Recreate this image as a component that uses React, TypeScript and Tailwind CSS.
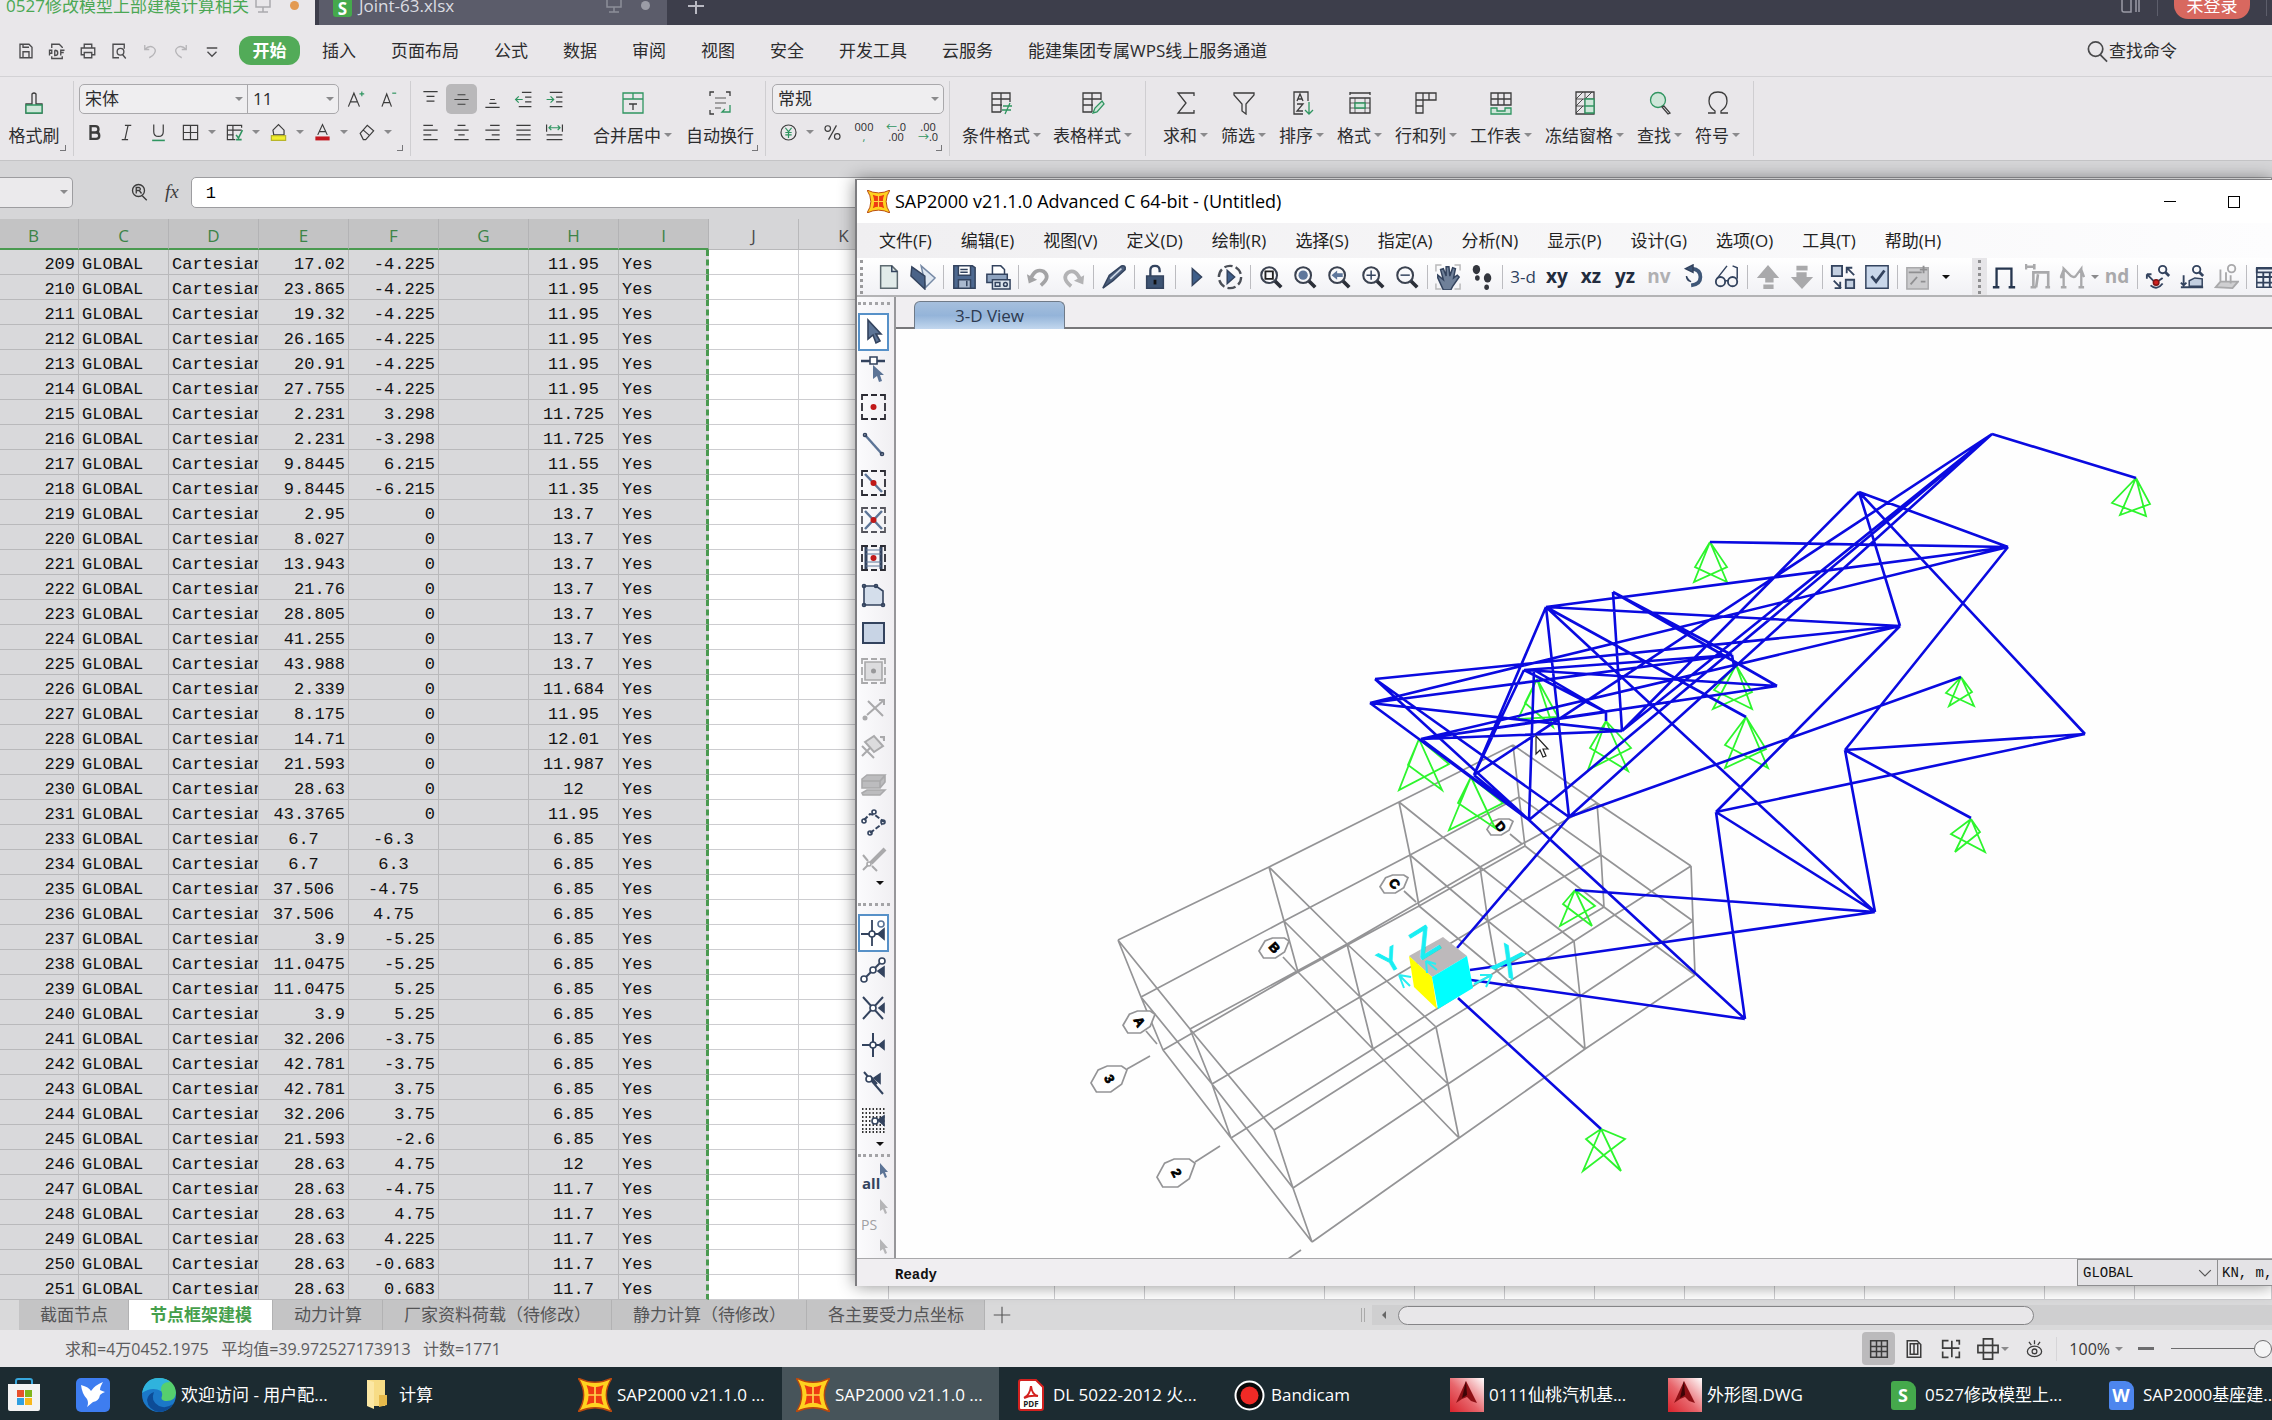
import { useState } from "react";
import type { ReactNode } from "react";

type Row = [number, string, string, string, boolean?];

// joint no., X, Y, Z, centred
const rows: Row[] = [
  [209, "17.02", "-4.225", "11.95"],
  [210, "23.865", "-4.225", "11.95"],
  [211, "19.32", "-4.225", "11.95"],
  [212, "26.165", "-4.225", "11.95"],
  [213, "20.91", "-4.225", "11.95"],
  [214, "27.755", "-4.225", "11.95"],
  [215, "2.231", "3.298", "11.725"],
  [216, "2.231", "-3.298", "11.725"],
  [217, "9.8445", "6.215", "11.55"],
  [218, "9.8445", "-6.215", "11.35"],
  [219, "2.95", "0", "13.7"],
  [220, "8.027", "0", "13.7"],
  [221, "13.943", "0", "13.7"],
  [222, "21.76", "0", "13.7"],
  [223, "28.805", "0", "13.7"],
  [224, "41.255", "0", "13.7"],
  [225, "43.988", "0", "13.7"],
  [226, "2.339", "0", "11.684"],
  [227, "8.175", "0", "11.95"],
  [228, "14.71", "0", "12.01"],
  [229, "21.593", "0", "11.987"],
  [230, "28.63", "0", "12"],
  [231, "43.3765", "0", "11.95"],
  [233, "6.7", "-6.3", "6.85", true],
  [234, "6.7", "6.3", "6.85", true],
  [235, "37.506", "-4.75", "6.85", true],
  [236, "37.506", "4.75", "6.85", true],
  [237, "3.9", "-5.25", "6.85"],
  [238, "11.0475", "-5.25", "6.85"],
  [239, "11.0475", "5.25", "6.85"],
  [240, "3.9", "5.25", "6.85"],
  [241, "32.206", "-3.75", "6.85"],
  [242, "42.781", "-3.75", "6.85"],
  [243, "42.781", "3.75", "6.85"],
  [244, "32.206", "3.75", "6.85"],
  [245, "21.593", "-2.6", "6.85"],
  [246, "28.63", "4.75", "12"],
  [247, "28.63", "-4.75", "11.7"],
  [248, "28.63", "4.75", "11.7"],
  [249, "28.63", "4.225", "11.7"],
  [250, "28.63", "-0.683", "11.7"],
  [251, "28.63", "0.683", "11.7"],
];

// the two lettered columns, then the ones behind the SAP2000 window
const emptyColumns = ["J", "K", ...Array.from({ length: 14 }, () => "")];

function Ico({
  w = 24,
  h = 24,
  box,
  color = "#3c3c3c",
  sw = 1.5,
  children,
}: {
  w?: number;
  h?: number;
  box?: string;
  color?: string;
  sw?: number;
  children: ReactNode;
}) {
  return (
    <svg
      width={w}
      height={h}
      viewBox={box ?? "0 0 24 24"}
      fill="none"
      stroke={color}
      strokeWidth={sw}
      aria-hidden="true"
      className="shrink-0"
    >
      {children}
    </svg>
  );
}

function Caret({ dark }: { dark?: boolean }) {
  return (
    <svg width="8" height="6" viewBox="0 0 8 6" aria-hidden="true" className="shrink-0">
      <path d="M0 1h8L4 5z" fill={dark ? "#111" : "#8a8a8c"} />
    </svg>
  );
}

const G = "#2f9560";
const GF = "#cfe6d9";

/* ---------- spreadsheet: tab strip and menu ---------- */

function DocTabs() {
  return (
    <header className="flex h-[25px] overflow-hidden bg-[#3d3e4b] text-[17px]">
      <button className="flex w-[315px] items-start bg-[#e9e7ea] text-left whitespace-nowrap text-[#4ba754]">
        <span className="-mt-[7px] pl-[6px] leading-[26px]">0527修改模型上部建模计算相关</span>
        <span className="ml-[5px]">
          <Monitor color="#aaaaae" />
        </span>
        <span className="mt-[1px] ml-[18px] size-[9px] rounded-full bg-[#e39a52]" />
      </button>
      <button className="ml-[4px] flex w-[348px] items-start bg-[#5b5c6a] pl-[14px] text-left text-[#dcdce2]">
        <span className="flex h-[17px] w-[19px] items-end justify-center rounded-b-[3px] bg-[#45a94c] text-[17px] leading-[17px] font-bold text-white">
          S
        </span>
        <span className="-mt-[7px] pl-[7px] leading-[26px]">Joint-63.xlsx</span>
        <span className="ml-auto flex pr-[17px]">
          <Monitor color="#8d8e99" />
          <span className="mt-[1px] ml-[18px] size-[9px] rounded-full bg-[#9b9ca6]" />
        </span>
      </button>
      <button aria-label="新建标签" className="ml-[20px]">
        <Ico w={18} h={24} box="0 0 18 24" color="#b9b9c2" sw={2}>
          <path d="M9-4v17M1 5h16" />
        </Ico>
      </button>
      <div className="ml-auto flex items-start text-[#8f909b]">
        <Ico w={22} h={14} box="0 0 22 14" color="#9a9ba6">
          <path d="M3 0v10q0 2 2 2h7V0M17 0v12M20 0v12" />
        </Ico>
        <span className="ml-[16px] h-4 w-px bg-[#5d5e6b]" />
        <button className="ml-[16px] h-[19px] w-[76px] rounded-b-[14px] bg-[#d8685f] text-white">
          <span className="-mt-[7px] block leading-[26px]">未登录</span>
        </button>
        <span className="mr-[5px] ml-[16px] h-4 w-px bg-[#5d5e6b]" />
      </div>
    </header>
  );
}

function Monitor({ color }: { color: string }) {
  return (
    <Ico w={18} h={14} box="0 0 18 14" color={color}>
      <path d="M2 0v7h14V0M9 7v5M4 12h10" />
    </Ico>
  );
}

const menus = ["插入", "页面布局", "公式", "数据", "审阅", "视图", "安全", "开发工具", "云服务", "能建集团专属WPS线上服务通道"];

function MenuRow() {
  return (
    <nav className="flex h-[52px] items-center border-b border-[#d3d2d5] bg-[#e9e7ea] text-[17px] whitespace-nowrap text-[#2c2c2e]">
      <div className="flex w-[239px] items-center pl-[10px]">
        <QuickButton label="保存">
          <path d="M4 3h12l4 4v14H4zM8 3v4h8M8 21v-8h8v8" />
        </QuickButton>
        <QuickButton label="输出为PDF">
          <path d="M5 8V3h10l4 4v1M5 19v3h14v-3M2 18v-7h3v4H2M9 11v7q4 0 4-3.500t-4-3.500M17 18v-7h5M17 14h4" />
        </QuickButton>
        <QuickButton label="打印">
          <path d="M7 8V3h10v5M7 17H3V8h18v9h-4M7 14h10v7H7z" />
        </QuickButton>
        <QuickButton label="打印预览">
          <path d="M12 21H4V3h15v6" />
          <circle cx="14" cy="13" r="4.500" />
          <path d="m17 17 4 5" />
        </QuickButton>
        <QuickButton label="撤销" color="#b6b5b8">
          <path d="M5 4v6h6M5 10q6-6 11-3t2 8q-2 4-7 6" />
        </QuickButton>
        <QuickButton label="恢复" color="#b6b5b8">
          <path d="M19 4v6h-6M19 10q-6-6-11-3t-2 8q2 4 7 6" />
        </QuickButton>
        <QuickButton label="自定义快速访问工具栏">
          <path d="M5 8h14M6 13l6 6 6-6" />
        </QuickButton>
      </div>
      <button className="h-[29px] w-[61px] rounded-[12px] bg-[#52ab58] font-bold text-white">开始</button>
      <div className="ml-[22px] flex gap-[35px]">
        {menus.map((m) => (
          <button key={m}>{m}</button>
        ))}
      </div>
      <button className="mr-[95px] ml-auto flex items-center">
        <Ico w={23} h={24} color="#4a4a4c" sw={1.8}>
          <circle cx="10" cy="10" r="7.500" />
          <path d="m15 16 7 7" />
        </Ico>
        查找命令
      </button>
    </nav>
  );
}

function QuickButton({ label, color, children }: { label: string; color?: string; children: ReactNode }) {
  return (
    <button aria-label={label} className="flex w-[31px] justify-center">
      <Ico w={18} h={18} color={color ?? "#4c4c4e"} sw={1.8}>
        {children}
      </Ico>
    </button>
  );
}

/* ---------- spreadsheet: ribbon ---------- */

function Big({ label, caret = true, children }: { label: string; caret?: boolean; children: ReactNode }) {
  return (
    <button className="flex flex-col items-center whitespace-nowrap">
      <span className="flex h-[38px] items-center">
        <Ico w={24} h={24} sw={1.3}>
          {children}
        </Ico>
      </span>
      <span className="flex h-[28px] items-center">
        {label}
        {caret && (
          <span className="-mt-[3px] flex w-[11px] justify-end">
            <Caret />
          </span>
        )}
      </span>
    </button>
  );
}

function Small({
  label,
  on,
  w31,
  children,
}: {
  label: string;
  on?: boolean;
  w31?: boolean;
  children: ReactNode;
}) {
  return (
    <button
      aria-label={label}
      className={`flex h-[30px] items-center justify-center rounded-[5px] ${w31 ? "w-[31px]" : "w-8"} ${on ? "bg-[#b9b8ba]" : ""}`}
    >
      <Ico w={19} h={19} sw={1.5}>
        {children}
      </Ico>
    </button>
  );
}

function SmallCaret() {
  return (
    <span className="flex w-3 items-center justify-center">
      <Caret />
    </span>
  );
}

function Combo({ label, value, className }: { label: string; value: string; className: string }) {
  return (
    <span className={`relative flex h-[30px] items-center ${className}`}>
      <select aria-label={label} className="h-full w-full appearance-none bg-transparent pl-[5px] text-[17px] outline-none">
        <option>{value}</option>
      </select>
      <span className="pointer-events-none absolute right-[4px]">
        <Caret />
      </span>
    </span>
  );
}

function Corner() {
  return (
    <span className="absolute right-[7px] bottom-[5px] size-[6px] border-r border-b border-[#77777a]" />
  );
}

function Ribbon() {
  return (
    <section className="flex h-[84px] border-b border-[#c4c4c6] bg-[#e9e7ea] text-[17px] text-[#2c2c2e]">
      <div className="relative my-[4px] flex w-[74px] justify-center border-r border-[#cfced1] pt-[3px] pr-[5px]">
        <Big label="格式刷" caret={false}>
          <path d="M10 13V3q2-2 4 0v10h6v9H4v-9z" />
          <path d="M4 14h16v8H4z" fill={GF} stroke={G} />
        </Big>
        <Corner />
      </div>

      <div className="relative my-[4px] flex w-[337px] flex-col border-r border-[#cfced1] pt-[3px] pl-[4px]">
        <div className="flex">
          <div className="ml-px flex w-[260px] rounded-[5px] border border-[#a9a8ab] bg-[#efeef0]">
            <Combo label="字体" value="宋体" className="-my-px flex-1" />
            <Combo label="字号" value="11" className="-my-px w-[91px] border-l border-[#a9a8ab]" />
          </div>
          <Small label="增大字号">
            <path d="M3 21 10 4l7 17M6 15h8" />
            <path d="M20 2v6M17 5h6" stroke={G} />
          </Small>
          <Small label="减小字号">
            <path d="M5 21 11 5l6 16M7 16h8" />
            <path d="M18 4h5" stroke={G} />
          </Small>
        </div>
        <div className="flex pt-[3px]">
          <Small label="加粗">
            <path d="M7 4v16h7q4 0 4-4t-4-4H7h6q4 0 4-4t-4-4z" strokeWidth="3" />
          </Small>
          <Small label="倾斜">
            <path d="M10 3h8M6 21h8M14 3l-4 18" />
          </Small>
          <Small label="下划线">
            <path d="M6 2v9q0 6 6 6t6-6V2" />
            <path d="M4 22h16" stroke={G} strokeWidth="2" />
          </Small>
          <Small label="边框">
            <path d="M3 3h18v18H3zM12 3v18M3 12h18" />
          </Small>
          <SmallCaret />
          <Small label="绘图边框">
            <path d="M21 6V3H3v18h10M3 9h18M3 15h8M10 3v18" />
            <path d="m14 15 3 4 5-10M14 21h7" stroke={G} strokeWidth="2" />
          </Small>
          <SmallCaret />
          <Small label="填充颜色">
            <path d="m5 9 7-7 7 7v6H6z" />
            <path d="M3 16h18v6H3z" fill="#f1ee2d" stroke="#b8b52a" />
          </Small>
          <SmallCaret />
          <Small label="字体颜色">
            <path d="m6 15 6-13 6 13M8 11h8" />
            <path d="M3 17h18v5H3z" fill="#c4171f" stroke="none" />
          </Small>
          <SmallCaret />
          <Small label="清除">
            <path d="M4 13 13 3l8 7-10 11H8zM8 9l8 7" />
          </Small>
          <SmallCaret />
        </div>
        <Corner />
      </div>

      <div className="relative my-[4px] flex w-[355px] border-r border-[#cfced1] pt-[3px] pl-[4px]">
        <div className="grid w-[178px] grid-cols-[31px_31px_31px_31px_31px] grid-rows-[30px_30px] gap-y-[3px]">
          <Small w31 label="顶端对齐">
            <path d="M3 2h18M7 8h10M7 14h10" />
          </Small>
          <Small w31 on label="垂直居中">
            <path d="M7 6h10M3 12h18M7 18h10" />
          </Small>
          <Small w31 label="底端对齐">
            <path d="M9 12h6M8 17h9M3 22h18" />
          </Small>
          <Small w31 label="减少缩进">
            <path d="M10 3h12M14 9h8M14 15h8M6 21h16" />
            <path d="M11 12H2m4-4-4 4 4 4" stroke={G} />
          </Small>
          <Small w31 label="增加缩进">
            <path d="M6 3h16M14 9h8M14 15h8M6 21h16" />
            <path d="M2 12h9M7 8l4 4-4 4" stroke={G} />
          </Small>
          <Small w31 label="左对齐">
            <path d="M3 3h12M3 9h18M3 15h10M3 21h18" />
          </Small>
          <Small w31 label="水平居中">
            <path d="M7 3h10M3 9h18M8 15h8M3 21h18" />
          </Small>
          <Small w31 label="右对齐">
            <path d="M9 3h12M3 9h18M11 15h10M3 21h18" />
          </Small>
          <Small w31 label="两端对齐">
            <path d="M3 3h18M3 9h18M3 15h18M3 21h18" />
          </Small>
          <Small w31 label="分散对齐">
            <path d="M2 2v9M22 2v9M2 15h20M2 21h20" />
            <path d="M5 6h14M8 3 5 6l3 3M16 3l3 3-3 3" stroke={G} />
          </Small>
        </div>
        <div className="flex gap-[14px]">
          <Big label="合并居中">
            <path d="M2 2h20v20H2zM2 8h20M12 2v6" stroke={G} />
            <path d="M8 13h8M12 13v6" />
          </Big>
          <Big label="自动换行" caret={false}>
            <path d="M6 1H2v4M18 1h4v4M2 19v4h4" />
            <path d="M7 7h11M7 12h11M7 17h6" stroke="#888" />
            <path d="M22 14v7h-8l3-3" stroke={G} />
          </Big>
        </div>
        <Corner />
      </div>

      <div className="relative my-[4px] w-[184px] border-r border-[#cfced1] pt-[3px] pl-[6px]">
        <Combo label="数字格式" value="常规" className="w-[172px] rounded-[5px] border border-[#a9a8ab] bg-[#efeef0]" />
        <div className="flex pt-[3px]">
          <Small label="货币">
            <circle cx="12" cy="12" r="9.500" />
            <path d="m8 6 4 5 4-5M12 11v8M8 12h8M8 15h8" stroke={G} />
          </Small>
          <SmallCaret />
          <Small label="百分比">
            <circle cx="6" cy="7" r="3.500" />
            <circle cx="18" cy="17" r="3.500" />
            <path d="M17 3 7 21" />
          </Small>
          <button aria-label="千位分隔" className="flex w-8 flex-col items-center justify-center text-[11px] leading-[10px]">
            000<span className="text-[#2f9560]">,</span>
          </button>
          <button aria-label="增加小数位" className="flex w-8 flex-col items-center justify-center text-[11px] leading-[10px]">
            <span>
              <span className="text-[#2f9560]">←</span>.0
            </span>
            <span>.00</span>
          </button>
          <button aria-label="减少小数位" className="flex w-8 flex-col items-center justify-center text-[11px] leading-[10px]">
            <span>.00</span>
            <span>
              <span className="text-[#2f9560]">→</span>.0
            </span>
          </button>
        </div>
        <Corner />
      </div>

      <div className="my-[4px] flex w-[196px] gap-[12px] border-r border-[#cfced1] pt-[3px] pl-[12px]">
        <Big label="条件格式">
          <path d="M20 11V2H2v19h9M2 8h18M2 14h10M11 2v19" />
          <path d="M13 15h9M12 19h9M20 12l-5 11" stroke={G} />
        </Big>
        <Big label="表格样式">
          <path d="M20 9V2H2v19h9M2 8h18M2 14h10M11 2v19" />
          <path d="m12 22 2-5 7-7 2 3-7 8z" stroke={G} fill={GF} />
        </Big>
      </div>

      <div className="my-[4px] flex w-[608px] gap-[13px] border-r border-[#cfced1] pt-[3px] pl-[17px]">
        <Big label="求和">
          <path d="M20 5V2H4l8 10-8 10h16v-3" />
        </Big>
        <Big label="筛选">
          <path d="M2 2h20v2l-8 9v10l-4-3v-7L2 4z" />
        </Big>
        <Big label="排序">
          <path d="M13 23H4V1h14v9" />
          <path d="m7 10 3-7 3 7M8 8h4M7 13h6l-6 7h6" />
          <path d="M19 11v12M15 19l4 4 4-4" stroke={G} />
        </Big>
        <Big label="格式">
          <path d="M2 1v3M22 1v3M2 2h20M2 7h20v15H2z" />
          <path d="M2 12h20M2 17h20M7 7v15M17 7v15" strokeWidth="0.800" />
          <path d="M7 12h10v5H7z" fill={GF} stroke={G} />
        </Big>
        <Big label="行和列">
          <path d="M2 2h20v7H9v13H2zM9 2v7M15 2v7M2 9h7M2 15h7" />
        </Big>
        <Big label="工作表">
          <path d="M2 2h20v12H2zM2 8h20M9 2v12M15 2v12" />
          <path d="M2 17h6v3h8v-3h6v6H2z" stroke={G} fill={GF} />
        </Big>
        <Big label="冻结窗格">
          <path d="M3 1h18v22H3z" />
          <path d="M3 8h18M3 15h18M12 1v22M3 8l7-7M12 8l7-7M3 15l7-7M3 22l7-7" strokeWidth="0.900" />
          <path d="M12 8h9v7h-9zM12 15h9v7h-9z" fill={GF} stroke={G} />
        </Big>
        <Big label="查找">
          <circle cx="10" cy="9" r="7.500" fill={GF} stroke={G} />
          <path d="m14 16 2-1 6 7-2 1z" />
        </Big>
        <Big label="符号">
          <path d="M2 22h7v-2q-6-4-6-10 0-9 9-9t9 9q0 6-6 10v2h7" />
        </Big>
      </div>
    </section>
  );
}

function FormulaBar() {
  const [formula, setFormula] = useState("1");
  return (
    <div className="flex h-[58px] items-center bg-[#d6d6d8] pt-[4px]">
      <span className="relative flex h-[31px] w-[73px] items-center rounded-r-[5px] border border-l-0 border-[#9d9da0] bg-[#ebeaec]">
        <input aria-label="名称框" className="w-[60px] bg-transparent outline-none" />
        <span className="absolute right-[4px]">
          <Caret />
        </span>
      </span>
      <button aria-label="浏览公式结果" className="ml-[58px]">
        <Ico w={18} h={18} sw={1.8}>
          <circle cx="10" cy="10" r="8" />
          <path d="m15 17 6 6M7 14V6h4q3 2 0 4H7m4 0 3 4" />
        </Ico>
      </button>
      <button className="mr-[12px] ml-[16px] font-['Liberation_Serif',serif] text-[19px] text-[#3c3c3e] italic">fx</button>
      <input
        aria-label="编辑栏"
        value={formula}
        onChange={(e) => setFormula(e.target.value)}
        className="h-[31px] min-w-0 flex-1 rounded-l-[5px] border border-[#9d9da0] bg-white px-[14px] pt-[3px] font-['Liberation_Mono',monospace] text-[17px] outline-none"
      />
    </div>
  );
}

/* ---------- spreadsheet: cells ---------- */

function Sheet() {
  const td = "h-[25px] border-r border-b border-[#b9b9bb] bg-[#d9d9db] px-[3px] pt-[5px]";
  const blank = "border-r border-b border-[#cdcdd0] bg-white";
  return (
    <table className="w-full table-fixed border-separate border-spacing-0 overflow-hidden font-['Liberation_Mono','Noto_Sans_CJK_SC',monospace] text-[17px] leading-[19px] whitespace-nowrap text-[#111]">
      <colgroup>
        <col className="w-[79px]" />
        <col className="w-[90px]" span={7} />
        <col className="w-[90px]" span={2} />
        <col className="w-[166px]" />
        <col className="w-[90px]" span={12} />
        <col />
      </colgroup>
      <thead className="font-['Open_Sans',sans-serif] text-[17px]">
        <tr className="h-[31px]">
          {["B", "C", "D", "E", "F", "G", "H", "I"].map((c) => (
            <th
              key={c}
              className={`border-r border-b-2 border-r-[#b3b3b5] border-b-[#4a9a50] bg-[#c3c3c4] pt-[3px] font-normal text-[#3c8447] ${c === "B" ? "pr-[11px]" : ""}`}
            >
              {c}
            </th>
          ))}
          {emptyColumns.map((c, i) => (
            <th key={i} className="border-r border-b border-[#b8b8ba] bg-[#d6d6d8] pt-[3px] font-normal text-[#4a4a4c]">
              {c}
            </th>
          ))}
        </tr>
      </thead>
      <tbody>
        {rows.map(([no, x, y, z, centred]) => (
          <tr key={no}>
            <td className={`${td} text-right`}>{no}</td>
            <td className={td}>GLOBAL</td>
            <td className={`${td} overflow-hidden text-clip`}>Cartesian</td>
            <td className={`${td} ${centred ? "text-center" : "text-right"}`}>{x}</td>
            <td className={`${td} ${centred ? "text-center" : "text-right"}`}>{y}</td>
            <td className={td} />
            <td className={`${td} text-center`}>{z}</td>
            <td className="h-[25px] border-r-3 border-b border-r-[#4a9a50] border-b-[#b9b9bb] bg-[#d9d9db] px-[3px] pt-[5px] [border-right-style:dashed]">
              Yes
            </td>
            {emptyColumns.map((_, i) => (
              <td key={i} className={blank} />
            ))}
          </tr>
        ))}
      </tbody>
    </table>
  );
}

const sheetTabs = ["截面节点", "节点框架建模", "动力计算", "厂家资料荷载（待修改）", "静力计算（待修改）", "各主要受力点坐标"];

function SheetTabs() {
  const [active, setActive] = useState(1);
  return (
    <div className="flex h-[30px] bg-[#d9d9da] pl-[19px] text-[17px] whitespace-nowrap text-[#545456]">
      {sheetTabs.map((t, i) => (
        <button
          key={t}
          onClick={() => setActive(i)}
          className={`border-r border-[#b2b2b3] pr-[20px] pl-[21px] ${i === active ? "bg-white font-bold text-[#469f4c]" : "bg-[#c4c4c5]"}`}
        >
          {t}
        </button>
      ))}
      <button aria-label="新建工作表" className="ml-[8px]">
        <Ico w={18} h={18} color="#555">
          <path d="M12 1v22M1 12h22" />
        </Ico>
      </button>
      <div className="ml-auto flex w-[911px] items-center">
        <span className="h-[14px] w-[4px] border-x border-[#aaa]" />
        <div className="ml-[7px] flex h-[20px] flex-1 items-center bg-[#cfcfd0]">
          <svg width="26" height="10" viewBox="0 0 26 10" aria-hidden="true">
            <path d="M14 1v8l-4-4z" fill="#666" />
          </svg>
          <div className="h-[19px] w-[636px] rounded-full border border-[#858587] bg-[#e8e7e9]" />
        </div>
      </div>
    </div>
  );
}

function StatusBar() {
  return (
    <footer className="flex h-[37px] items-center bg-[#e8e7e9] pl-[65px] text-[16px] text-[#5c5c5e]">
      <span className="whitespace-pre">求和=4万0452.1975   平均值=39.972527173913   计数=1771</span>
      <div className="ml-auto flex items-center">
        <button aria-label="普通视图" className="flex h-[33px] w-[33px] items-center justify-center rounded-[4px] bg-[#bbbabc]">
          <Ico w={22} h={20} sw={1.8}>
            <path d="M2 2h20v20H2zM2 9h20M2 15h20M9 2v20M15 2v20" />
          </Ico>
        </button>
        <button aria-label="页面布局" className="flex w-[38px] justify-center">
          <Ico w={18} h={20} sw={2}>
            <path d="M3 1h13l5 5v17H3zM7 5h5v14H7zM12 5h5v14h-5z" />
          </Ico>
        </button>
        <button aria-label="分页预览" className="flex w-[36px] justify-center">
          <Ico w={22} h={20} sw={2}>
            <path d="M9 2H2v9h20M13 2v20M2 15v7h7M18 2h4v5M22 15v7h-5" />
          </Ico>
        </button>
        <button aria-label="阅读模式" className="flex w-[47px] items-center justify-center gap-[2px]">
          <Ico w={22} h={22} sw={1.8}>
            <path d="M7 1h10v22H7zM1 8h22v8H1z" />
          </Ico>
          <Caret />
        </button>
        <button aria-label="护眼模式" className="flex w-[36px] justify-center">
          <Ico w={19} h={20} sw={1.6}>
            <ellipse cx="12" cy="15" rx="9" ry="6.500" />
            <circle cx="12" cy="15" r="3" />
            <path d="M12 1v5M5 3l3 4M19 3l-3 4" />
          </Ico>
        </button>
        <button className="ml-[4px] flex items-center gap-[5px] border-l border-[#d6d5d8] pl-[12px] text-[#3a3a3c]">
          100%
          <Caret />
        </button>
        <button aria-label="缩小" className="ml-[15px] h-[3px] w-[16px] bg-[#6c6c6e]" />
        <div className="ml-[17px] flex w-[101px] items-center overflow-hidden">
          <span className="h-px flex-1 bg-[#6c6c6e]" />
          <span className="h-[18px] w-[18px] rounded-full border border-[#6c6c6e] bg-[#f4f4f5]" />
        </div>
      </div>
    </footer>
  );
}

/* ---------- SAP2000 window ---------- */

const B1 = "#33435e";
const B2 = "#5c7496";
const BL = "#c3cfe0";
const GR = "#a9a9ab";

function Tool({ label, children }: { label: string; children: ReactNode }) {
  return (
    <button aria-label={label} className="flex h-8 w-[34px] shrink-0 items-center justify-center">
      <Ico w={26} h={26} color={B1} sw={1.6} box="0 0 28 28">
        {children}
      </Ico>
    </button>
  );
}

function TextTool({ children, tone }: { children: string; tone: string }) {
  return (
    <button className={`flex h-8 w-[34px] shrink-0 items-center justify-center leading-none ${tone}`}>{children}</button>
  );
}

function Sep() {
  return (
    <span className="flex w-[7px] shrink-0 justify-center">
      <span className="h-6 w-px bg-[#bcbcc0]" />
    </span>
  );
}

function Lens({ children }: { children?: ReactNode }) {
  return (
    <>
      <path d="m18 18 7 7" strokeWidth="4" stroke="#2b2f38" />
      <circle cx="12" cy="12" r="8.500" stroke="#3b4250" strokeWidth="2.200" />
      {children}
    </>
  );
}

function SapToolbar() {
  return (
    <div className="flex h-[39px] items-center overflow-hidden border-b-2 border-[#b3b3b5] bg-linear-to-b from-white to-[#f1f1f5] text-[#2d3f5e]">
      <span className="ml-[3px] h-[34px] w-[12px] shrink-0 border-l-3 border-dotted border-[#9a9a9c]" />
      <Tool label="新建">
        <path d="M5 2h12l6 6v18H5z" fill="#e1ebe9" stroke="#5d6a70" />
        <path d="M17 2v6h6" />
      </Tool>
      <Tool label="打开">
        <path d="M12 2 27 15 17 25z" fill="#dfe7f1" stroke="#7689a5" />
        <path d="M2 3 16 13v14L1 13z" fill="#4a6388" />
      </Tool>
      <Sep />
      <Tool label="保存">
        <path d="M3 2h20l3 2v22H3z" fill="#4d688f" />
        <path d="M8 2h13v10H8z" fill="#fff" />
        <path d="M8 17h13v9H8z" fill="#aab9cf" />
        <path d="M17 18v6M10 6h8M10 9h8" />
      </Tool>
      <Tool label="打印">
        <path d="M8 11V2h9l4 4v5" fill="#fff" />
        <path d="M2 11h22v9H2z" fill="#8ea3bf" />
        <path d="M8 17h19v10H8z" fill="#dde5ee" />
        <path d="M11 20h5v4h-5z" />
        <circle cx="22" cy="22" r="2" />
      </Tool>
      <Sep />
      <Tool label="撤销">
        <path d="M5 16Q10 4 19 8q8 6-3 15" stroke="#a3a3a5" strokeWidth="4" />
        <path d="m1 11 2 10 9-4z" fill="#a3a3a5" stroke="none" />
      </Tool>
      <Tool label="重做">
        <path d="M22 17Q17 5 9 9q-8 6 3 15" stroke="#b3b3b5" strokeWidth="4" />
        <path d="m26 12-1 10-10-4z" fill="#b3b3b5" stroke="none" />
      </Tool>
      <Sep />
      <Tool label="编辑">
        <path d="M2 26 9 12 22 2q5-1 4 4L13 18z" fill="#4c5f7d" />
        <path d="m10 16 12-11" stroke="#cfd9e8" />
      </Tool>
      <Sep />
      <Tool label="解锁">
        <path d="M9 13V7q0-5 5-5t5 5v2" strokeWidth="2.500" />
        <path d="M5 13h18v13H5z" fill="#3d5373" />
        <path d="M14 17v5" stroke="#111" strokeWidth="3" />
      </Tool>
      <Sep />
      <Tool label="运行分析">
        <path d="M10 5v18l10-9z" fill="#3f5f8a" />
      </Tool>
      <Tool label="运行">
        <circle cx="14" cy="14" r="12" strokeDasharray="9 3.500" strokeWidth="2.500" stroke="#4b4f57" />
        <path d="M11 7v14l8-7z" fill="#3f5f8a" />
      </Tool>
      <Sep />
      <Tool label="窗口缩放">
        <Lens>
          <path d="M8 8h8v8H8z" strokeWidth="2" stroke="#222" />
        </Lens>
      </Tool>
      <Tool label="恢复全图">
        <Lens>
          <circle cx="12" cy="12" r="5" fill="#5f779b" stroke="none" />
        </Lens>
      </Tool>
      <Tool label="恢复前一缩放">
        <Lens>
          <path d="m6 12 6-5v3h6v4h-6v3z" fill="#5f779b" stroke="none" />
        </Lens>
      </Tool>
      <Tool label="放大">
        <Lens>
          <path d="M7 12h10M12 7v10" />
        </Lens>
      </Tool>
      <Tool label="缩小">
        <Lens>
          <path d="M7 12h10" />
        </Lens>
      </Tool>
      <Sep />
      <Tool label="平移">
        <path d="M1 8V1h6M21 1h6v6M1 21v6h6M27 21v6h-6" stroke="#b9b9bb" />
        <path d="m3 12 6 5L6 6l3-1 3 8V3h3l1 10 3-9 3 1-2 10 4-3 2 2-7 10-2 4h-8L3 15z" fill="#6f8099" />
      </Tool>
      <Tool label="漫游">
        <g fill="#33363d" stroke="none">
          <ellipse cx="8" cy="6" rx="4" ry="5" />
          <ellipse cx="9" cy="15" rx="2.500" ry="3" />
          <ellipse cx="20" cy="15" rx="4" ry="5" />
          <ellipse cx="19" cy="25" rx="2.500" ry="3" />
        </g>
      </Tool>
      <Sep />
      <TextTool tone="text-[17px]">3-d</TextTool>
      <TextTool tone="text-[19px] font-bold text-[#222c3e]">xy</TextTool>
      <TextTool tone="text-[19px] font-bold text-[#222c3e]">xz</TextTool>
      <TextTool tone="text-[19px] font-bold text-[#222c3e]">yz</TextTool>
      <TextTool tone="text-[19px] font-bold text-[#b0b0b2]">nv</TextTool>
      <Tool label="旋转三维视图">
        <path d="M13 5q9 1 9 9t-10 9" strokeWidth="4" stroke="#3e5677" />
        <path d="m6 5 8-4v8zM7 13q0 5 5 6" fill="#3e5677" />
      </Tool>
      <Tool label="透视">
        <circle cx="7" cy="19" r="5" strokeWidth="2" />
        <circle cx="20" cy="19" r="5" strokeWidth="2" />
        <path d="M12 18h3M3 16 14 2M25 16V4l-5-2" />
      </Tool>
      <Sep />
      <Tool label="上移">
        <path d="M14 1 26 15h-6v5h-9v-5H2zM9 22h11v5H9z" fill={GR} stroke="none" />
      </Tool>
      <Tool label="下移">
        <path d="M14 27 2 14h6V9h11v5h7zM8 2h12v5H8z" fill={GR} stroke="none" />
      </Tool>
      <Sep />
      <Tool label="收缩对象">
        <path d="M2 2h11v11H2z" fill={BL} strokeWidth="2" />
        <path d="M17 17h9v9h-9z" fill={BL} strokeWidth="2" />
        <path d="M18 10V4h6M18 4l8 8M4 18l8 8M11 19v7H5" strokeWidth="2" />
      </Tool>
      <Tool label="设置显示选项">
        <path d="M2 2h24v24H2z" fill="#c9d7ea" />
        <path d="m8 13 5 6 9-12" strokeWidth="3" />
      </Tool>
      <Sep />
      <Tool label="指定">
        <path d="M2 4h23v23H2z" fill="#cbcbcd" stroke={GR} />
        <path d="M4 9h14M6 22l7-8M17 19h5M20 2v8M16 6h8" stroke="#8f8f91" strokeWidth="2" />
      </Tool>
      <button aria-label="更多" className="ml-[4px] flex w-[14px] shrink-0 justify-center">
        <Caret dark />
      </button>
      <span className="ml-[19px] flex h-full w-[15px] shrink-0 items-center justify-center bg-[#e6e5e8]">
        <span className="h-[34px] border-l-3 border-dotted border-[#8f8f91]" />
      </span>
      <Tool label="框架">
        <path d="M6 25V5h16v20M2 25h7M19 25h7" strokeWidth="2.500" stroke="#26364f" />
      </Tool>
      <Tool label="变形">
        <path d="M9 25V9h16v16M6 25h6M22 25h5M1 3h9M1 0v6M10 0v6M12 25l2-14" strokeWidth="2.800" stroke={GR} />
      </Tool>
      <Tool label="内力">
        <path d="M5 25V5l8 8q3 2 5 0l6-8v20M1 14h5M2 25h6M21 25h6M5 6 2 14M24 6l3 8" strokeWidth="2.500" stroke={GR} />
      </Tool>
      <span className="flex w-[11px] shrink-0 justify-center">
        <Caret />
      </span>
      <TextTool tone="text-[19px] font-bold text-[#a9a9ab]">nd</TextTool>
      <Sep />
      <Tool label="节点荷载">
        <circle cx="19" cy="6" r="4" strokeWidth="2" />
        <path d="m22 9 4 4" strokeWidth="3" />
        <path d="m2 11 9 9M2 11v5M2 11h5M12 20l7-5M6 23q7 6 13-2" strokeWidth="2" />
        <circle cx="12" cy="20" r="3" fill="#d02020" stroke="#801414" />
      </Tool>
      <Tool label="框架荷载">
        <circle cx="19" cy="6" r="4" strokeWidth="2" />
        <path d="m22 9 4 4" strokeWidth="3" />
        <path d="M2 25h24M5 12v11M2 20l3 3 3-3" strokeWidth="2" />
        <path d="M11 24v-6l6-3 8 1v8z" fill={BL} />
      </Tool>
      <Tool label="面荷载">
        <circle cx="20" cy="5" r="4" strokeWidth="2" stroke={GR} />
        <path d="M3 25 8 19h19l-6 7zM8 6v12M14 9v11M19 12v9" fill="#cfcfd1" stroke={GR} strokeWidth="2" />
      </Tool>
      <Sep />
      <Tool label="表格">
        <path d="M3 4h24v21H3z" fill="#eef3fa" />
        <path d="M3 5h24v4H3zM3 14h24M3 20h24M10 9v16M17 9v16" strokeWidth="2" />
      </Tool>
    </div>
  );
}

function SideTool({ label, on, children }: { label: string; on?: boolean; children: ReactNode }) {
  return (
    <button
      aria-label={label}
      className={`flex min-h-0 w-[31px] flex-1 items-center justify-center overflow-hidden border-2 ${on ? "border-[#5791c8] bg-white" : "border-transparent"}`}
    >
      <Ico w={27} h={28} box="0 0 27 28" color={B1} sw={1.6}>
        {children}
      </Ico>
    </button>
  );
}

function DashBox({ color = "#2b2b33" }: { color?: string }) {
  return <path d="M2 7V2h6M11 2h6M20 2h5v5M25 10v8M25 21v5h-5M17 26h-6M8 26H2v-5M2 18v-8" stroke={color} strokeWidth="1.800" />;
}

function Grip() {
  return <span className="w-[32px] border-t-3 border-dotted border-[#a3a3a6]" />;
}

function SideBar() {
  return (
    <aside className="flex w-[37px] shrink-0 flex-col overflow-hidden bg-linear-to-r from-[#fbfbfd] to-[#f0eff2] pt-[5px] pl-[1px]">
      <Grip />
      <div className="mt-[8px] flex h-[565px] flex-col">
        <SideTool label="选择" on>
          <path d="M8 2v19l5-4 3 8 4-2-4-7h5z" fill={B2} />
        </SideTool>
        <SideTool label="重新定形">
          <path d="M1 5h24" strokeWidth="2.500" />
          <path d="M10 1h7v7h-7z" fill="#fff" />
          <path d="M13 9v14l4-3 2 6 3-1-2-6h4z" fill={B2} stroke="none" />
        </SideTool>
        <SideTool label="绘制特殊节点">
          <DashBox />
          <circle cx="13.500" cy="14" r="3" fill="#c01818" stroke="none" />
        </SideTool>
        <SideTool label="绘制框架">
          <path d="m5 4 17 19" strokeWidth="2.500" stroke={B2} />
          <circle cx="5" cy="4" r="1.500" />
          <circle cx="22" cy="23" r="1.500" />
        </SideTool>
        <SideTool label="快速绘制框架">
          <DashBox />
          <path d="m5 5 17 18" strokeWidth="2.500" stroke={B2} />
          <circle cx="13.500" cy="14" r="3" fill="#c01818" stroke="none" />
        </SideTool>
        <SideTool label="快速绘制支撑">
          <DashBox color="#55555d" />
          <path d="m5 5 17 18M22 5 5 23" strokeWidth="2.500" stroke={B2} />
          <circle cx="13.500" cy="14" r="3" fill="#c01818" stroke="none" />
        </SideTool>
        <SideTool label="快速绘制次梁">
          <DashBox />
          <path d="M6 3v22M21 3v22" strokeWidth="3" />
          <path d="M6 6h15M6 10h15M6 18h15M6 22h15" stroke={B2} strokeWidth="1" />
          <circle cx="13.500" cy="14" r="3" fill="#c01818" stroke="none" />
        </SideTool>
        <SideTool label="绘制多边形面">
          <path d="M4 4h12l7 5v14H4z" fill="#d4deeb" />
          <circle cx="4" cy="4" r="1.500" />
          <circle cx="16" cy="4" r="1.500" />
          <circle cx="23" cy="23" r="1.500" />
          <circle cx="4" cy="23" r="1.500" />
        </SideTool>
        <SideTool label="绘制矩形面">
          <path d="M3 4h21v20H3z" fill="#c8d4e5" strokeWidth="2" />
        </SideTool>
        <SideTool label="快速绘制面">
          <DashBox color={GR} />
          <path d="M5 5h17v18H5z" fill="#dcdcde" stroke={GR} />
          <circle cx="13.500" cy="14" r="2.500" fill="#98989a" stroke="none" />
        </SideTool>
        <SideTool label="绘制连接">
          <path d="M8 6l15 15M7 20 24 5M19 5h5v5" stroke={GR} strokeWidth="2" />
          <circle cx="5" cy="23" r="2.500" fill={GR} stroke="none" />
        </SideTool>
        <SideTool label="绘制截面切割">
          <path d="m5 10 9-6 9 10-9 6zM2 14l12 12M2 24l9-9M20 5h4v4" fill="#dcdcde" stroke={GR} strokeWidth="2" />
        </SideTool>
        <SideTool label="绘制实体">
          <path d="M2 9 7 5h18l-5 6H2zM2 11h18v7H2zM20 11l5-5v6l-5 6M2 23l5-3h18l-5 5H3z" fill="#bcbcbe" stroke={GR} />
        </SideTool>
        <SideTool label="绘制参考点">
          <path d="m4 12 6-6 5 1 9 7M10 25l12-9" strokeDasharray="5 2" strokeWidth="2" />
          <circle cx="4" cy="13" r="2" />
          <circle cx="14" cy="4" r="2" />
          <circle cx="23" cy="14" r="2" />
          <circle cx="10" cy="25" r="2" />
        </SideTool>
        <SideTool label="绘制切线">
          <path d="M3 10l5 6M3 25l5-5M17 26l-5-5" stroke={GR} strokeWidth="2" />
          <path d="M11 18 25 4" stroke={GR} strokeWidth="4" />
          <circle cx="9" cy="19" r="2" stroke={GR} />
        </SideTool>
      </div>
      <span className="flex h-[10px] w-[31px] items-center justify-end pr-[5px]">
        <Caret dark />
      </span>
      <span className="mt-[15px] flex">
        <Grip />
      </span>
      <div className="mt-[8px] flex h-[225px] flex-col">
        <SideTool label="捕捉到点" on>
          <path d="M12 1v26M1 15h22" strokeWidth="1.800" />
          <circle cx="12" cy="15" r="3" fill="#fff" />
          <circle cx="21" cy="5" r="3" stroke={B2} />
          <path d="M24 10v10l-6-5z" fill={B1} />
        </SideTool>
        <SideTool label="捕捉到中点">
          <path d="M4 23 22 5" strokeWidth="2" />
          <circle cx="4" cy="23" r="3" fill="#fff" />
          <circle cx="13" cy="14" r="3" fill="#fff" />
          <circle cx="22" cy="5" r="3" fill="#fff" />
          <path d="M24 11v9l-6-5z" fill={B1} />
        </SideTool>
        <SideTool label="捕捉到交点">
          <path d="m3 3 20 22M23 3 3 25" strokeWidth="2" />
          <circle cx="13" cy="14" r="3" fill="#fff" />
          <path d="M24 10v8l-5-4z" fill={B1} />
        </SideTool>
        <SideTool label="捕捉到垂足">
          <path d="M2 14h20M13 2v24" strokeWidth="2" />
          <circle cx="13" cy="14" r="3" fill="#fff" />
          <path d="M24 10v8l-5-4z" fill={B1} />
        </SideTool>
        <SideTool label="捕捉到线">
          <path d="m4 3 19 22M10 7l7 8" strokeWidth="2" />
          <circle cx="9" cy="10" r="3" fill="#fff" />
          <path d="M20 5v9l-6-5z" fill={B1} />
        </SideTool>
        <SideTool label="捕捉到细网格">
          <path d="M2 3h23M2 7h23M2 11h23M2 15h23M2 19h23M2 23h23M2 26h23" strokeDasharray="1.500 2" strokeWidth="2" stroke="#333" />
          <circle cx="15" cy="15" r="3" fill="#fff" />
          <path d="M24 10v9l-6-5z" fill={B1} />
        </SideTool>
      </div>
      <span className="flex h-[10px] w-[31px] items-center justify-end pr-[5px]">
        <Caret dark />
      </span>
      <span className="mt-[5px] flex">
        <Grip />
      </span>
      <button className="relative flex h-[38px] w-[31px] items-end pb-[4px] pl-[4px] text-[15px] leading-[15px] font-bold text-[#33435e]">
        all
        <span className="absolute top-[6px] right-[1px]">
          <Pointer color={B2} />
        </span>
      </button>
      <button className="relative flex h-[38px] w-[31px] items-end pb-[1px] pl-[3px] text-[14px] leading-[14px] text-[#a0a0a2]">
        PS
        <span className="absolute top-[4px] right-[1px]">
          <Pointer color="#b5b5b7" />
        </span>
      </button>
      <span className="flex w-[31px] justify-end pt-[6px] pr-[1px]">
        <Pointer color="#b5b5b7" />
      </span>
    </aside>
  );
}

function Pointer({ color }: { color: string }) {
  return (
    <svg width="9" height="16" viewBox="0 0 9 16" aria-hidden="true">
      <path d="M1 0v12l3-2 2 5 2-1-2-5h3z" fill={color} />
    </svg>
  );
}

/* ---------- model view ---------- */

type Pt = [number, number];

// grid lines 3, 2, 1 by A..D, each with its top, middle and bottom level
const grid: Pt[][][] = [
  [
    [[1119, 939], [1142, 996], [1164, 1049]],
    [[1270, 866], [1285, 920], [1299, 971]],
    [[1400, 801], [1411, 854], [1420, 905]],
    [[1514, 744], [1520, 796], [1526, 845]],
  ],
  [
    [[1191, 1028], [1213, 1083], [1232, 1137]],
    [[1348, 943], [1361, 996], [1374, 1048]],
    [[1481, 866], [1489, 920], [1498, 970]],
    [[1598, 802], [1602, 854], [1605, 906]],
  ],
  [
    [[1275, 1129], [1294, 1187], [1313, 1241]],
    [[1437, 1026], [1449, 1083], [1460, 1137]],
    [[1575, 940], [1581, 995], [1586, 1048]],
    [[1692, 865], [1694, 920], [1696, 974]],
  ],
];

const bubbles = [
  { id: "D", x: 1501, y: 826, rx: 13, ry: 8, to: "M1511 833 1523 843" },
  { id: "C", x: 1395, y: 883, rx: 14, ry: 9, to: "M1405 890 1417 901" },
  { id: "B", x: 1275, y: 947, rx: 15, ry: 10, to: "M1284 956 1297 970" },
  { id: "A", x: 1140, y: 1021, rx: 16, ry: 11, to: "M1147 1030 1158 1043" },
  { id: "3", x: 1110, y: 1078, rx: 18, ry: 13, to: "M1128 1068 1151 1055" },
  { id: "2", x: 1177, y: 1172, rx: 19, ry: 14, to: "M1196 1161 1221 1145" },
];
const bubbleShape: Pt[] = [[-1, 0.3], [-0.6, -0.7], [-0.1, -1], [0.7, -1], [1, -0.7], [0.7, 0.4], [0.1, 1], [-0.7, 1]];

const nodes: Record<string, Pt> = {
  a: [1993, 433], a2: [2137, 477], b: [1860, 491], c: [2009, 546], d: [1901, 625], e: [1711, 541],
  f: [1547, 606], g: [1614, 591], h: [1376, 678], i: [1371, 702], j: [1422, 738], k: [1475, 774],
  l: [1530, 819], m: [1570, 816], n: [1623, 730], o: [1607, 711], o2: [1607, 720], p: [1778, 685],
  q: [1733, 654], q2: [1735, 665], r: [1747, 716], s: [1525, 669], s2: [1535, 669], t: [1962, 676],
  u: [2086, 733], v: [1846, 749], w: [1972, 817], x: [1717, 811], y: [1876, 911], z: [1576, 889],
  aa: [1746, 1018], c1: [1458, 947], c2: [1471, 969], c3: [1472, 979], c4: [1459, 997], ab: [1602, 1128],
};

const frames =
  "a-a2 a-k a-l a-m a-n b-n b-c b-d b-u c-e c-f c-i c-v d-f d-h d-j d-x f-k f-m f-r f-y g-q g-p g-n " +
  "q-s q-i q-q2 q-g p-s p-j h-l h-m i-n i-l j-l j-n j-o k-s k-l s-o s2-o s2-l s2-s o-o2 m-t u-v u-x v-w v-y " +
  "x-y x-aa z-y c2-y c3-aa l-aa m-c1 c4-ab";

// apex, left foot, right foot, left side, right side
const supports: Pt[][] = [
  [[2137, 477], [2121, 514], [2147, 515], [2113, 502], [2151, 503]],
  [[1711, 541], [1695, 581], [1728, 581], [1696, 566], [1728, 566]],
  [[1747, 716], [1726, 767], [1769, 767], [1726, 744], [1767, 748]],
  [[1737, 664], [1714, 708], [1753, 708], [1715, 689], [1753, 691]],
  [[1962, 676], [1950, 705], [1975, 705], [1947, 692], [1973, 691]],
  [[1972, 818], [1956, 851], [1986, 851], [1952, 833], [1981, 831]],
  [[1576, 889], [1561, 925], [1593, 925], [1564, 903], [1596, 905]],
  [[1607, 720], [1589, 769], [1629, 770], [1591, 747], [1632, 747]],
  [[1538, 678], [1519, 718], [1554, 726], [1526, 702], [1559, 716]],
  [[1420, 738], [1400, 789], [1443, 789], [1409, 764], [1450, 763]],
  [[1472, 776], [1450, 829], [1496, 827], [1459, 802], [1504, 802]],
  [[1602, 1128], [1584, 1170], [1622, 1170], [1587, 1138], [1626, 1138]],
];

const line = (pts: Pt[]) => "M" + pts.map((p) => p.join(" ")).join("L");

function ModelView() {
  const gridPath: string[] = [];
  for (let lv = 0; lv < 3; lv++) {
    for (let r = 0; r < 3; r++) gridPath.push(line(grid[r].map((c) => c[lv])));
    for (let c = 0; c < 4; c++) gridPath.push(line(grid.map((r) => r[c][lv])));
  }
  grid.forEach((r) => r.forEach((c) => gridPath.push(line(c))));

  const framePath = frames
    .split(" ")
    .map((f) => line(f.split("-").map((n) => nodes[n])))
    .join("");

  const supportPath = supports
    .map(([a, lf, rf, ls, rs]) => line([a, lf, rs, a, rf, ls, a]))
    .join("");

  return (
    <svg
      viewBox="897 328 1376 929"
      preserveAspectRatio="xMinYMin slice"
      className="block h-full w-full bg-[#fefefe]"
      role="img"
      aria-label="3-D View"
      fill="none"
    >
      <g stroke="#949496" strokeWidth="1.700">
        <path d={gridPath.join("")} />
        <path d="M1289 1258 1302 1249" />
        {bubbles.map((b) => (
          <g key={b.id}>
            <path d={b.to} />
            <path
              d={line(bubbleShape.map(([x, y]) => [b.x + x * b.rx, b.y + y * b.ry] as Pt)) + "Z"}
              fill="#fefefe"
            />
          </g>
        ))}
      </g>
      <g
        fill="#000"
        stroke="#000"
        strokeWidth="0.800"
        fontFamily="Liberation Sans, sans-serif"
        fontWeight="700"
        fontSize="13"
        textAnchor="middle"
      >
        {bubbles.map((b) => (
          <text key={b.id} x={b.x} y={b.y + 4} transform={`rotate(${b.rx > 15 ? 62 : 48} ${b.x} ${b.y})`}>
            {b.id}
          </text>
        ))}
      </g>
      <path d={supportPath} stroke="#2df52d" strokeWidth="1.800" />
      <path d={framePath} stroke="#0a0ae0" strokeWidth="2.600" />
      <path d="M1410 955 1444 936 1468 955 1433 976Z" fill="#bdb9bb" />
      <path d="M1410 955 1433 976 1438 1008 1415 986Z" fill="#ffff00" />
      <path d="M1433 976 1468 955 1474 987 1439 1008Z" fill="#00ffff" />
      <g stroke="#28eef2" strokeWidth="2">
        <path d="M1411 985 1400 974M1400 974 1405 987M1400 974 1412 976M1438 969 1427 960M1427 960 1428 972M1427 960 1437 963M1475 983 1493 974M1493 974 1481 974M1493 974 1487 986" />
      </g>
      <g fill="#19eef2" stroke="#19eef2" fontFamily="Liberation Sans, sans-serif" textAnchor="middle">
        <text x="1425" y="955" fontSize="40" transform="rotate(-32 1425 941)">Z</text>
        <text x="1390" y="970" fontSize="32" transform="rotate(-30 1390 958)">Y</text>
        <text x="1509" y="974" fontSize="40" transform="rotate(28 1509 960)">X</text>
      </g>
      <path d="M1537 735v18l4-4 3 7 3-1-3-7h5z" fill="#fff" stroke="#222" strokeWidth="1.200" />
    </svg>
  );
}

const sapMenus = ["文件(F)", "编辑(E)", "视图(V)", "定义(D)", "绘制(R)", "选择(S)", "指定(A)", "分析(N)", "显示(P)", "设计(G)", "选项(O)", "工具(T)", "帮助(H)"];

function SapLogo({ size }: { size: number }) {
  return (
    <svg width={size} height={size} viewBox="0 0 24 24" aria-hidden="true" className="shrink-0">
      <path d="M0 0q12 6 24 0-8 12 0 24-12-6-24 0Q8 12 0 0z" fill="#ffd21f" stroke="#b8470f" />
      <path d="M6 5q6 3 12 0-3 7 0 14-6-3-12 0 3-7 0-14z" fill="#ee3a12" />
      <path d="M12 6v12M7 12h10" stroke="#ffd24a" strokeWidth="1.200" />
    </svg>
  );
}

function SapWindow() {
  return (
    <section
      aria-label="SAP2000"
      className="absolute top-[179px] right-0 bottom-[14px] left-[855px] flex flex-col border-t border-l-2 border-[#7d7d80] bg-[#f0eef1] shadow-[0_0_16px_rgba(0,0,0,0.45)]"
    >
      <div className="flex h-[43px] items-center bg-white pl-[10px] text-black">
        <SapLogo size={23} />
        <h1 className="pl-[5px] text-[18px]">SAP2000 v21.1.0 Advanced C 64-bit - (Untitled)</h1>
        <button aria-label="最小化" className="ml-auto flex w-[64px] items-center justify-center">
          <span className="h-px w-[12px] bg-black" />
        </button>
        <button aria-label="最大化" className="mr-[6px] flex w-[64px] items-center justify-center">
          <span className="size-[12px] border border-black" />
        </button>
      </div>
      <nav className="flex h-[35px] items-center gap-[29px] bg-linear-to-r from-[#f0eff1] to-[#fdfdfe] pl-[22px] text-[17px] whitespace-nowrap text-[#222]">
        {sapMenus.map((m) => (
          <button key={m}>{m}</button>
        ))}
      </nav>
      <SapToolbar />
      <div className="flex min-h-0 flex-1">
        <SideBar />
        <div className="flex min-w-0 flex-1 flex-col border-l-2 border-[#97979a]">
          <div className="flex h-[32px] shrink-0 items-end border-b-2 border-[#77777a] pl-[18px]">
            <button className="-mb-[2px] h-[28px] w-[151px] rounded-t-[6px] border border-b-0 border-[#6f7a88] bg-linear-to-b from-[#a6bfdd] via-[#94b4d9] to-[#c2d7ee] text-[17px] text-[#2d3a50]">
              3-D View
            </button>
          </div>
          <div className="min-h-0 flex-1">
            <ModelView />
          </div>
        </div>
      </div>
      <footer className="flex h-[28px] items-center border-t border-[#a9a9ab] pl-[38px] font-['Liberation_Mono',monospace] text-[14px] text-[#111]">
        <strong className="pt-[5px]">Ready</strong>
        <span className="relative ml-auto flex h-[27px] w-[141px] items-center border border-[#8e8e90] bg-[#e4e3e6]">
          <select aria-label="坐标系" className="h-full w-full appearance-none bg-transparent pt-[2px] pl-[5px] outline-none">
            <option>GLOBAL</option>
          </select>
          <span className="pointer-events-none absolute right-[5px]">
            <Ico w={14} h={14} color="#555" sw={2}>
              <path d="m2 7 10 10L22 7" />
            </Ico>
          </span>
        </span>
        <span className="h-[27px] w-[54px] overflow-hidden border-y border-[#8e8e90] bg-[#e4e3e6] pt-px pl-[4px] leading-[25px] whitespace-nowrap">
          KN, m,
        </span>
      </footer>
    </section>
  );
}

/* ---------- taskbar ---------- */

function AcadIcon() {
  return (
    <svg width="34" height="34" viewBox="0 0 34 34" aria-hidden="true">
      <defs>
        <linearGradient id="acad" x1="0" y1="1" x2="1" y2="0">
          <stop offset="0" stopColor="#d8222b" />
          <stop offset="0.450" stopColor="#e8666c" />
          <stop offset="1" stopColor="#fff" />
        </linearGradient>
      </defs>
      <path d="M0 0h34v34H0z" fill="url(#acad)" />
      <path d="m16 3 11 22-6-2-4-4-5 2-6 4z" fill="#8d1015" />
      <path d="m16 3-4 17 5-3z" fill="#3c0507" />
    </svg>
  );
}

function WpsIcon({ letter, blue }: { letter: string; blue?: boolean }) {
  return (
    <span
      className={`flex h-[29px] w-[25px] items-center justify-center rounded-[3px] rounded-tr-[9px] text-[18px] font-bold ${blue ? "bg-[#4d86ee]" : "bg-[#45a94c]"}`}
    >
      {letter}
    </span>
  );
}

const tasks: { name: string; icon: ReactNode; active?: boolean }[] = [
  {
    name: "欢迎访问 - 用户配...",
    icon: (
      <svg width="34" height="34" viewBox="0 0 34 34" aria-hidden="true">
        <circle cx="17" cy="17" r="17" fill="#1b78c8" />
        <path d="M1 12Q6 0 17 0q16 1 17 15-1 9-11 8-5-1-3-5 1-5-4-8-7-3-15 2z" fill="#56cf6e" />
        <path d="M0 15Q3 0 17 0q7 0 11 4-10 0-9 9-9-5-19 2z" fill="#2fb3dd" />
        <path d="M12 14q-4 9 5 14 7 3 14-2-5 8-14 8Q6 32 5 22q1-6 7-8z" fill="#0d4c97" />
      </svg>
    ),
  },
  {
    name: "计算",
    icon: (
      <svg width="22" height="38" viewBox="0 0 22 38" aria-hidden="true">
        <path d="M1 4h18v26H1z" fill="#f7dc86" />
        <path d="M13 19h8v10l-8 2z" fill="#e6b94b" />
        <path d="M1 4 8 6v27l-7-3z" fill="#fbe7a4" />
      </svg>
    ),
  },
  { name: "SAP2000 v21.1.0 ...", icon: <SapLogo size={34} /> },
  { name: "SAP2000 v21.1.0 ...", icon: <SapLogo size={34} />, active: true },
  {
    name: "DL 5022-2012 火...",
    icon: (
      <svg width="26" height="32" viewBox="0 0 26 32" aria-hidden="true">
        <path d="M3 1h15l7 7v21q0 2-2 2H3q-2 0-2-2V3q0-2 2-2z" fill="#fff" stroke="#d3211f" strokeWidth="2" />
        <path d="M6 19q6-3 7-12 1 9 7 10-8-1-14 2z" fill="none" stroke="#d3211f" strokeWidth="2" />
        <text x="13" y="28" textAnchor="middle" fontSize="8" fontWeight="700" fill="#222">PDF</text>
      </svg>
    ),
  },
  {
    name: "Bandicam",
    icon: (
      <svg width="31" height="31" viewBox="0 0 31 31" aria-hidden="true">
        <circle cx="15.500" cy="15.500" r="14" fill="#0a0a0a" stroke="#fff" strokeWidth="2" />
        <circle cx="15.500" cy="15.500" r="9" fill="#ef2a26" />
      </svg>
    ),
  },
  { name: "0111仙桃汽机基...", icon: <AcadIcon /> },
  { name: "外形图.DWG", icon: <AcadIcon /> },
  { name: "0527修改模型上...", icon: <WpsIcon letter="S" /> },
  { name: "SAP2000基座建...", icon: <WpsIcon letter="W" blue /> },
];

function Taskbar() {
  return (
    <div className="flex h-[53px] overflow-hidden bg-[#1c2b31] text-[17px] whitespace-nowrap text-white">
      <button aria-label="Microsoft Store" className="flex w-[48px] shrink-0 items-center justify-center pt-[3px]">
        <svg width="34" height="34" viewBox="0 0 34 34" aria-hidden="true">
          <path d="M9 8V3q0-2 2-2h12q2 0 2 2v5" fill="none" stroke="#38a7dd" strokeWidth="2" />
          <path d="M1 6h32v25q0 2-2 2H3q-2 0-2-2z" fill="#f3f3f3" />
          <path d="M10 12h7v7h-7z" fill="#e8502a" />
          <path d="M18 12h7v7h-7z" fill="#7fb51b" />
          <path d="M10 20h7v7h-7z" fill="#2f9fe0" />
          <path d="M18 20h7v7h-7z" fill="#f8b71a" />
        </svg>
      </button>
      <button aria-label="迅雷" className="flex w-[90px] shrink-0 items-center justify-center pt-[3px]">
        <svg width="34" height="34" viewBox="0 0 34 34" aria-hidden="true">
          <rect width="34" height="34" rx="5" fill="#3e7df0" />
          <path d="M5 7q8 2 10 6 4-6 12-9-3 5-3 8 2 1 5 2-3 1-5 3-1 6-7 7l-6 5q2-4 0-8-5-5-6-14z" fill="#fff" />
        </svg>
      </button>
      <div className="-ml-[10px] flex shrink-0 gap-px">
        {tasks.map((t, i) => (
          <button key={i} className={`flex w-[217px] shrink-0 items-center pt-[3px] ${t.active ? "bg-[#47545a]" : ""}`}>
            <span className="flex w-[53px] shrink-0 items-center justify-center pl-[9px]">{t.icon}</span>
            {t.name}
          </button>
        ))}
      </div>
    </div>
  );
}

export default function App() {
  return (
    <div className="overflow-hidden bg-[#d6d6d8] font-['Open_Sans','Noto_Sans_CJK_SC',sans-serif]">
      <div className="relative">
        <DocTabs />
        <MenuRow />
        <Ribbon />
        <FormulaBar />
        <Sheet />
        <SapWindow />
      </div>
      <SheetTabs />
      <StatusBar />
      <Taskbar />
    </div>
  );
}
